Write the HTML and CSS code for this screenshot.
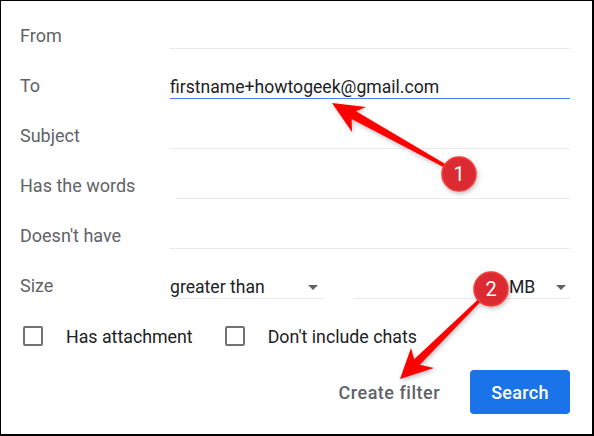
FILE: index.html
```html
<!DOCTYPE html>
<html>
<head>
<meta charset="utf-8">
<link rel="stylesheet" href="styles.css">
</head>
<body>
<div class="dialog">
  <div class="row">
    <div class="label">From</div>
    <div class="field"></div>
  </div>
  <div class="row">
    <div class="label">To</div>
    <div class="field active">firstname+howtogeek@gmail.com</div>
  </div>
  <div class="row">
    <div class="label">Subject</div>
    <div class="field"></div>
  </div>
  <div class="row">
    <div class="label">Has the words</div>
    <div class="field shifted"></div>
  </div>
  <div class="row">
    <div class="label">Doesn't have</div>
    <div class="field"></div>
  </div>
  <div class="row">
    <div class="label">Size</div>
    <div class="size-group">
      <div class="field select sel-op">greater than<span class="caret"></span></div>
      <div class="field num"></div>
      <div class="field select sel-unit">MB<span class="caret"></span></div>
    </div>
  </div>
  <div class="row checks">
    <div class="check"><span class="box"></span><span class="check-text">Has attachment</span></div>
    <div class="check"><span class="box"></span><span class="check-text">Don't include chats</span></div>
  </div>
  <div class="actions">
    <button class="link-btn">Create filter</button>
    <button class="primary-btn">Search</button>
  </div>

  <svg class="annot" width="594" height="436" viewBox="0 0 594 436">
    <defs>
      <filter id="sh" x="-20%" y="-20%" width="140%" height="140%">
        <feDropShadow dx="1" dy="2" stdDeviation="2" flood-color="#000" flood-opacity="0.25"/>
      </filter>
    </defs>
    <g filter="url(#sh)">
      <polygon fill="#ff0000" points="332,103 366,107 356,111.3 456.7,170.7 455.3,173.3 351.6,119.1 352,132"/>
      <polygon fill="#ff0000" points="400,379 411,348 414.2,359.2 486,292 488,294 419.8,364.8 434,368"/>
      <circle cx="459" cy="174" r="17" fill="#dc2c31" stroke="#f43a3a" stroke-width="1.5"/>
      <circle cx="491" cy="289" r="17" fill="#dc2c31" stroke="#f43a3a" stroke-width="1.5"/>
    </g>
    <text x="459" y="181" class="num-label">1</text>
    <text x="491" y="296" class="num-label">2</text>
  </svg>
</div>
</body>
</html>
```

FILE: styles.css
```css
html, body {
  margin: 0;
  padding: 0;
  background: #fff;
}

.dialog {
  position: relative;
  box-sizing: border-box;
  width: 594px;
  height: 436px;
  border-top: 1px solid #000;
  border-left: 1px solid #000;
  border-right: 2px solid #000;
  border-bottom: 2px solid #000;
  padding: 10px 22px 0 19px;
  font-family: Roboto, "Liberation Sans", Arial, sans-serif;
  font-size: 18px;
  background: #fff;
}

.row {
  display: flex;
  align-items: center;
  height: 50px;
}

.label {
  width: 150px;
  flex: none;
  color: #5f6368;
  line-height: 22px;
  font-size: 18px;
}

.field {
  flex: 1;
  height: 22px;
  line-height: 22px;
  border-bottom: 1px solid #e8eaed;
  color: #202124;
  position: relative;
  margin-top: 2px;
  font-size: 17.6px;
}

.field.active {
  border-bottom: 1px solid #4a86e8;
}

.field.shifted {
  margin-left: 6px;
}

.size-group {
  flex: 1;
  display: flex;
  align-items: center;
}

.sel-op {
  flex: none;
  width: 154px;
}

.num {
  flex: none;
  width: 140px;
  margin-left: 30px;
}

.sel-unit {
  flex: 1;
  margin-left: 10px;
  padding-left: 5px;
}

.caret {
  position: absolute;
  top: 9px;
  width: 0;
  height: 0;
  border-left: 5px solid transparent;
  border-right: 5px solid transparent;
  border-top: 5px solid #5f6368;
}

.sel-op .caret {
  right: 6px;
}

.sel-unit .caret {
  right: 4px;
}

.check {
  display: flex;
  align-items: center;
}

.check + .check {
  margin-left: 29px;
}

.box {
  box-sizing: border-box;
  width: 20px;
  height: 20px;
  border: 2px solid #727272;
  border-radius: 2px;
  margin-left: 3px;
  margin-right: 23px;
}

.check-text {
  color: #202124;
  font-size: 17.8px;
}

.actions {
  display: flex;
  justify-content: flex-end;
  align-items: center;
  margin-top: 9px;
}

.link-btn {
  border: none;
  background: none;
  padding: 0;
  font-family: inherit;
  font-size: 18px;
  font-weight: 500;
  letter-spacing: 0.5px;
  color: #5f6368;
  margin-right: 30px;
}

.primary-btn {
  border: none;
  width: 100px;
  height: 44px;
  border-radius: 4px;
  background: #1a73e8;
  color: #fff;
  font-family: inherit;
  font-size: 18px;
  font-weight: 500;
  letter-spacing: 0.3px;
}

.annot {
  position: absolute;
  left: -1px;
  top: -1px;
  pointer-events: none;
}

.num-label {
  fill: #fff;
  font-family: Roboto, "Liberation Sans", Arial, sans-serif;
  font-size: 20px;
  text-anchor: middle;
}
```
